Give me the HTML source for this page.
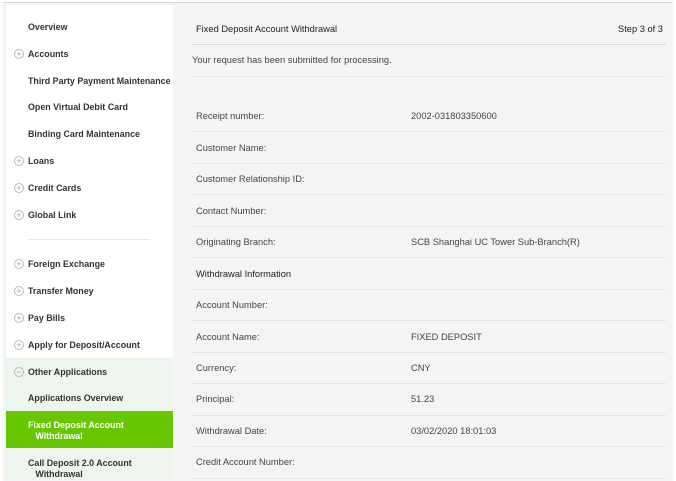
<!DOCTYPE html>
<html><head><style>
body{margin:0;width:676px;height:480px;overflow:hidden;background:#fff;font-family:"Liberation Sans",Arial,sans-serif;position:relative}
.bg{position:absolute;left:3px;top:2px;width:670px;height:478px;background:#f4f4f4;border-top:1px solid #d8d8d8}
.side{position:absolute;left:6px;top:5px;width:167px;height:475px;background:#fff}
.gr{position:absolute;left:6px;top:358px;width:167px;height:122px;background:#eef5ee}
.act{position:absolute;left:6px;top:411px;width:167px;height:37px;background:#66c600}
.it{position:absolute;left:28px;font-size:8.9px;font-weight:bold;color:#333;white-space:nowrap;line-height:11px;margin-top:1px}
.ic{position:absolute;left:14px;width:8px;height:8px;border:1px solid #bbb;border-radius:50%;font-size:9px;color:#aaa;text-align:center;line-height:8px;font-weight:normal;margin-top:1px}
.t{position:absolute;font-size:9.3px;color:#444;white-space:nowrap}
.ln{position:absolute;left:192px;width:474px;height:1px;background:#e4e4e4}
</style></head><body>
<div class="bg"></div>
<div class="side"></div>
<div class="gr"></div>
<div class="act"></div>
<div class="it" style="top:21px">Overview</div>
<div class="ic" style="top:48px">+</div><div class="it" style="top:48px">Accounts</div>
<div class="it" style="top:75px">Third Party Payment Maintenance</div>
<div class="it" style="top:101px">Open Virtual Debit Card</div>
<div class="it" style="top:128px">Binding Card Maintenance</div>
<div class="ic" style="top:155px">+</div><div class="it" style="top:155px">Loans</div>
<div class="ic" style="top:182px">+</div><div class="it" style="top:182px">Credit Cards</div>
<div class="ic" style="top:209px">+</div><div class="it" style="top:209px">Global Link</div>
<div style="position:absolute;left:28px;top:239px;width:122px;height:1px;background:#e8e8e8"></div>
<div class="ic" style="top:258px">+</div><div class="it" style="top:258px">Foreign Exchange</div>
<div class="ic" style="top:285px">+</div><div class="it" style="top:285px">Transfer Money</div>
<div class="ic" style="top:312px">+</div><div class="it" style="top:312px">Pay Bills</div>
<div class="ic" style="top:339px">+</div><div class="it" style="top:339px">Apply for Deposit/Account</div>
<div class="ic" style="top:366px">−</div><div class="it" style="top:366px">Other Applications</div>
<div class="it" style="top:392px">Applications Overview</div>
<div class="it" style="top:419px;color:#fff">Fixed Deposit Account<br>&nbsp;&nbsp;&nbsp;Withdrawal</div>
<div class="it" style="top:457px">Call Deposit 2.0 Account<br>&nbsp;&nbsp;&nbsp;Withdrawal</div>

<div class="t" style="left:196px;top:24px;color:#222">Fixed Deposit Account Withdrawal</div>
<div class="t" style="left:618px;top:24px;color:#222">Step 3 of 3</div>
<div class="ln" style="top:44px;background:#d8d8d8"></div>
<div class="t" style="left:192px;top:55px">Your request has been submitted for processing.</div>
<div class="ln" style="top:76px"></div>
<div class="t" style="left:196px;top:111px">Receipt number:</div><div class="t" style="left:411px;top:111px">2002-031803350600</div>
<div class="ln" style="top:131px"></div>
<div class="t" style="left:196px;top:143px">Customer Name:</div>
<div class="ln" style="top:163px"></div>
<div class="t" style="left:196px;top:174px">Customer Relationship ID:</div>
<div class="ln" style="top:194px"></div>
<div class="t" style="left:196px;top:206px">Contact Number:</div>
<div class="ln" style="top:226px"></div>
<div class="t" style="left:196px;top:237px">Originating Branch:</div><div class="t" style="left:411px;top:237px">SCB Shanghai UC Tower Sub-Branch(R)</div>
<div class="ln" style="top:257px"></div>
<div class="t" style="left:196px;top:269px;color:#222">Withdrawal Information</div>
<div class="ln" style="top:289px"></div>
<div class="t" style="left:196px;top:300px">Account Number:</div>
<div class="ln" style="top:320px"></div>
<div class="t" style="left:196px;top:332px">Account Name:</div><div class="t" style="left:411px;top:332px">FIXED DEPOSIT</div>
<div class="ln" style="top:352px"></div>
<div class="t" style="left:196px;top:363px">Currency:</div><div class="t" style="left:411px;top:363px">CNY</div>
<div class="ln" style="top:383px"></div>
<div class="t" style="left:196px;top:394px">Principal:</div><div class="t" style="left:411px;top:394px">51.23</div>
<div class="ln" style="top:415px"></div>
<div class="t" style="left:196px;top:426px">Withdrawal Date:</div><div class="t" style="left:411px;top:426px">03/02/2020 18:01:03</div>
<div class="ln" style="top:446px"></div>
<div class="t" style="left:196px;top:457px">Credit Account Number:</div>
<div class="ln" style="top:478px"></div>
</body></html>
